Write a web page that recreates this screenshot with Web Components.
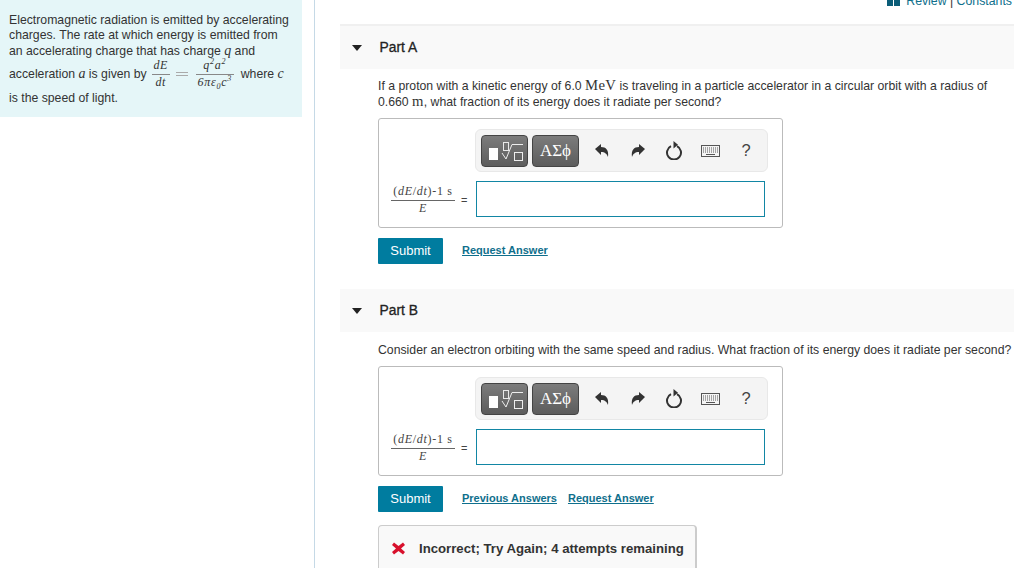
<!DOCTYPE html>
<html>
<head>
<meta charset="utf-8">
<title>Part A and Part B</title>
<style>
html, body { margin: 0; padding: 0; background: #fff; overflow: hidden; height: 568px; }
body { font-family: "Liberation Sans", Arial, sans-serif; color: #333; font-size: 12.25px; }
</style>
</head>
<body>
<study-page>
  <info-panel slot="side"></info-panel>
  <top-links slot="main"></top-links>
  <question-part slot="main" label="Part A" style="--gap-after:25px">
    <span>If a proton with a kinetic energy of 6.0 <math-text upright>MeV</math-text> is traveling in a particle accelerator in a circular orbit with a radius of<br>0.660 <math-text upright>m</math-text>, what fraction of its energy does it radiate per second?</span>
    <answer-box slot="answer"></answer-box>
    <submit-row slot="answer" links="Request Answer"></submit-row>
  </question-part>
  <question-part slot="main" label="Part B" style="--gap-after:0px">
    <span>Consider an electron orbiting with the same speed and radius. What fraction of its energy does it radiate per second?</span>
    <answer-box slot="answer"></answer-box>
    <submit-row slot="answer" links="Previous Answers|Request Answer"></submit-row>
    <feedback-box slot="answer">Incorrect; Try Again; 4 attempts remaining</feedback-box>
  </question-part>
</study-page>

<script>
// small helper so every element gets the same open shadow setup
function mount(el, html) {
    el.attachShadow({ mode: 'open' });
    el.shadowRoot.innerHTML = html.trim();
}

class StudyPage extends HTMLElement {
    connectedCallback() {
        mount(this, `
            <style>
                :host { display: flex; height: 568px; overflow: hidden; }
                .side { width: 314px; height: 568px; border-right: 1px solid #c5d9e6; flex: none; }
                .main { margin-left: 25px; width: 674px; flex: none; }
            </style>
            <div class="side"><slot name="side"></slot></div>
            <div class="main"><slot name="main"></slot></div>
        `);
    }
}

class MathText extends HTMLElement {
    connectedCallback() {
        mount(this, `
            <style>
                :host { display: inline; font-family: "Liberation Serif", serif; font-size: 1.2em; letter-spacing: 0.3px; line-height: 0; }
            </style>
            <slot></slot>
        `);
    }
}

class InfoPanel extends HTMLElement {
    connectedCallback() {
        mount(this, `
            <style>
                :host { display: block; width: 302px; height: 117px; box-sizing: border-box; background: #e5f6f8; padding: 13px 9px 0; font-size: 12.25px; line-height: 15.3px; color: #333; white-space: nowrap; }
                .eq { display: flex; align-items: center; height: 31px; margin-bottom: 1px; white-space: pre; }
                i { font-family: "Liberation Serif", serif; font-size: 14px; line-height: 0; }
                .frac { display: inline-flex; flex-direction: column; align-items: center; font-family: "Liberation Serif", serif; font-style: italic; font-size: 12px; letter-spacing: 0.7px; line-height: 15px; }
                .frac b { font-weight: normal; display: block; text-align: center; width: 100%; }
                .frac b:first-child { border-bottom: 1px solid #888; padding-bottom: 1px; }
                .f1 { width: 18px; margin-left: 5px; }
                .f2 { width: 38px; }
                sup, sub { font-size: 8px; line-height: 0; }
                .equals { width: 12px; height: 2px; border-top: 1px solid #aaa; border-bottom: 1px solid #aaa; margin: 0 8px 0 6px; }
                .where { margin-left: 7px; }
            </style>
            Electromagnetic radiation is emitted by accelerating<br>
            charges. The rate at which energy is emitted from<br>
            an accelerating charge that has charge <i>q</i> and
            <div class="eq">acceleration <i>a</i> is given by<span class="frac f1"><b>dE</b><b>dt</b></span><span class="equals"></span><span class="frac f2"><b>q<sup>2</sup>a<sup>2</sup></b><b>6πε<sub>0</sub>c<sup>3</sup></b></span><span class="where">where <i>c</i></span></div>
            <div>is the speed of light.</div>
        `);
    }
}

class TopLinks extends HTMLElement {
    connectedCallback() {
        mount(this, `
            <style>
                :host { display: flex; justify-content: flex-end; align-items: center; height: 14px; margin-top: -6px; margin-bottom: 16px; font-size: 12.3px; color: #0f6f8c; white-space: pre; }
                svg { margin-right: 6px; }
                .sep { color: #333; }
            </style>
            <svg width="13" height="14" viewBox="0 0 13 14"><path d="M0 2h6v10H0zM7 2h6v10H7z" fill="#0b5d78"/></svg>
            <span>Review <span class="sep">|</span> Constants</span><span style="width:2px"></span>
        `);
    }
}

class QuestionPart extends HTMLElement {
    connectedCallback() {
        const label = this.getAttribute('label');
        mount(this, `
            <style>
                :host { display: block; margin-bottom: var(--gap-after, 0); }
                .head { display: flex; align-items: center; height: 43px; padding-left: 12px; background: #f9f9f9; font-size: 13.8px; color: #222; -webkit-text-stroke: 0.3px #222; }
                :host([label="Part A"]) .head { border-top: 2px solid #f0f0f0; }
                .arrow { width: 0; height: 0; border-left: 5.5px solid transparent; border-right: 5.5px solid transparent; border-top: 6px solid #222; margin-right: 17.500px; }
                .body { padding: 10.3px 0 0 38px; }
                .text { font-size: 12.25px; line-height: 15.4px; color: #333; white-space: nowrap; margin-bottom: 8.1px; }
            </style>
            <div class="head"><span class="arrow"></span>${label}</div>
            <div class="body">
                <div class="text"><slot></slot></div>
                <slot name="answer"></slot>
            </div>
        `);
    }
}

class AnswerBox extends HTMLElement {
    connectedCallback() {
        mount(this, `
            <style>
                :host { display: block; width: 405px; height: 110px; box-sizing: border-box; border: 1px solid #bbb; border-radius: 3px; padding: 10px 0 0 12px; }
                .row { display: flex; align-items: center; margin-top: 9px; }
                .frac { width: 64px; margin-top: 2px; display: flex; flex-direction: column; align-items: center; font-family: "Liberation Serif", serif; font-size: 12px; letter-spacing: 0.7px; line-height: 15px; color: #444; }
                .frac span:first-child { width: 100%; text-align: center; border-bottom: 1px solid #666; padding-bottom: 1px; white-space: nowrap; }
                .eq { width: 6px; margin: 2px 9px 0 6px; font-size: 11px; color: #444; text-align: center; }
                .field { width: 289px; height: 36px; box-sizing: border-box; border: 1px solid #1286a4; background: #fff; }
                math-toolbar { margin-left: 84px; }
            </style>
            <math-toolbar></math-toolbar>
            <div class="row">
                <div class="frac"><span>(<i>dE</i>/<i>dt</i>)-1 s</span><span><i>E</i></span></div>
                <div class="eq">=</div>
                <div class="field"></div>
            </div>
        `);
    }
}

class MathToolbar extends HTMLElement {
    connectedCallback() {
        mount(this, `
            <style>
                :host { display: block; width: 293px; height: 43px; box-sizing: border-box; background: #f4f4f4; border: 1px solid #e8e8e8; border-radius: 6px; }
                .inner { display: flex; align-items: center; height: 100%; padding-left: 5px; }
                .btn { width: 47px; height: 32px; box-sizing: border-box; margin-right: 4px; border: 1px solid #444; border-radius: 4px; background: linear-gradient(#7c7c7c, #5c5c5c); color: #fff; display: flex; align-items: center; justify-content: center; font-family: "Liberation Serif", serif; font-size: 17px; flex: none; }
                .tool { width: 36px; height: 32px; display: flex; align-items: center; justify-content: center; flex: none; }
                .q { font-size: 16.5px; color: #444; font-family: "Liberation Sans", sans-serif; }
            </style>
            <div class="inner">
                <span class="btn">
                    <svg width="45" height="30" viewBox="0 0 45 30">
                        <rect x="7" y="12" width="9" height="12" fill="#fff"/>
                        <rect x="21.500" y="6.500" width="5" height="8" fill="none" stroke="#e8e8e8"/>
                        <path d="M20 17l4 6 6-14.500h11" fill="none" stroke="#eee"/>
                        <rect x="32.500" y="16.500" width="8" height="8" fill="none" stroke="#eee"/>
                    </svg>
                </span>
                <span class="btn">ΑΣϕ</span>
                <span style="width:1px;flex:none"></span>
                <span class="tool"><svg width="16" height="16" viewBox="0 0 16 16"><path d="M1 6l6-5v3c5 0 8 3 7 10-1-3-3-5-7-5v3z" fill="#333"/></svg></span>
                <span class="tool"><svg width="16" height="16" viewBox="0 0 16 16"><path d="M15 6l-6-5v3c-5 0-8 3-7 10 1-3 3-5 7-5v3z" fill="#333"/></svg></span>
                <span class="tool"><svg width="18" height="19" viewBox="0 0 18 19"><path d="M6 5.200a7 7 0 1 0 6 0" fill="none" stroke="#333" stroke-width="2"/><path d="M8.500 0v7.500l4.500-3.700z" fill="#333"/></svg></span>
                <span class="tool"><svg width="19" height="12" viewBox="0 0 19 12"><rect x=".5" y=".5" width="18" height="11" fill="#f4f4f4" stroke="#555"/><path d="M2 3h15M2 5h15M2 7h15" stroke="#555" stroke-dasharray="1 1"/><path d="M5 9.500h9" stroke="#555"/></svg></span>
                <span class="tool q">?</span>
            </div>
        `);
    }
}

class SubmitRow extends HTMLElement {
    connectedCallback() {
        const links = this.getAttribute('links').split('|').map(t => `<a href="#">${t}</a>`).join('');
        mount(this, `
            <style>
                :host { display: flex; align-items: center; height: 26px; margin-top: 10px; }
                button { width: 65px; height: 26px; border: 0; padding: 0 0 1px; background: #007c9f; color: #fff; font: 13px "Liberation Sans", sans-serif; margin-right: 19px; border-radius: 1px; }
                a { color: #0f6f8c; font-size: 11px; font-weight: bold; margin-right: 11px; text-decoration: underline; position: relative; top: -1px; }
            </style>
            <button>Submit</button>${links}
        `);
    }
}

class FeedbackBox extends HTMLElement {
    connectedCallback() {
        mount(this, `
            <style>
                :host { display: flex; align-items: center; width: 319px; height: 46px; box-sizing: border-box; margin-top: 13px; padding-left: 13px; border: 1px solid #ccc; border-right-width: 2px; border-radius: 4px 4px 0 0; background: #f9f9f9; font-size: 13.2px; font-weight: bold; color: #333; white-space: nowrap; }
                svg { margin-right: 14px; flex: none; }
            </style>
            <svg width="13" height="13" viewBox="0 0 13 13"><path d="M2 .5L6.500 4 11 .5 13 3 9 6.500 13 10l-2 2.500-4.500-3.500L2 12.500 0 10l4-3.500L0 3z" fill="#d8102c"/></svg>
            <slot></slot>
        `);
    }
}

customElements.define('math-text', MathText);
customElements.define('info-panel', InfoPanel);
customElements.define('top-links', TopLinks);
customElements.define('math-toolbar', MathToolbar);
customElements.define('answer-box', AnswerBox);
customElements.define('submit-row', SubmitRow);
customElements.define('feedback-box', FeedbackBox);
customElements.define('question-part', QuestionPart);
customElements.define('study-page', StudyPage);
</script>
</body>
</html>
